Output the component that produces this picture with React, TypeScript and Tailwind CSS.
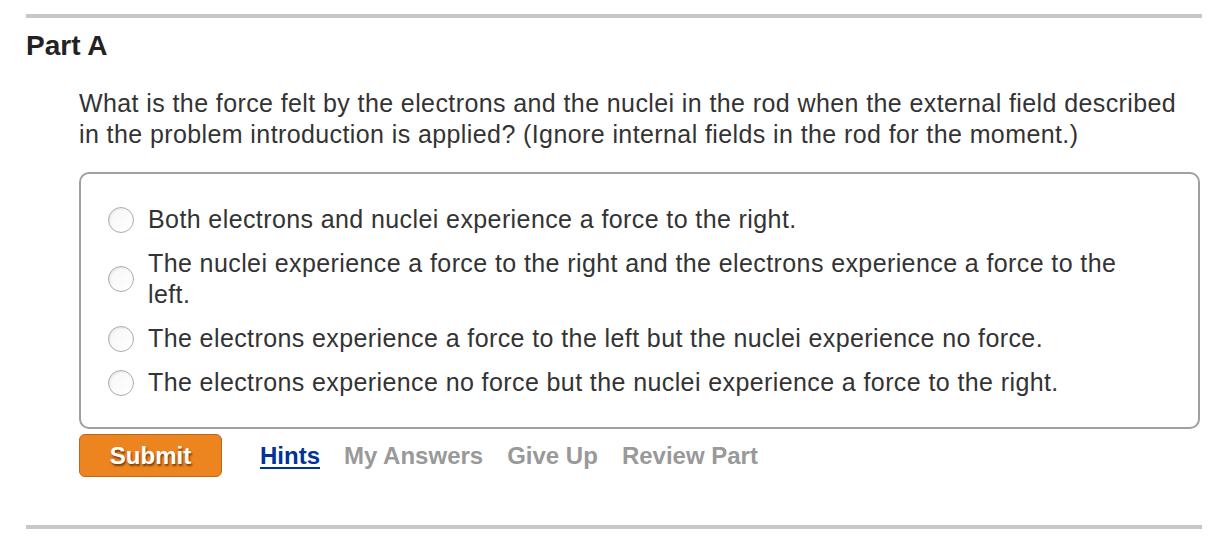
import React from 'react';

const options = [
  'Both electrons and nuclei experience a force to the right.',
  'The nuclei experience a force to the right and the electrons experience a force to the left.',
  'The electrons experience a force to the left but the nuclei experience no force.',
  'The electrons experience no force but the nuclei experience a force to the right.',
];

const Radio: React.FC = () => (
  <span className="block w-[26px] h-[26px] shrink-0 rounded-full border border-[#acacac] bg-gradient-to-br from-[#f6f6f6] to-white shadow-[inset_1px_1px_2px_rgba(0,0,0,0.08)]" />
);

export default function App() {
  return (
    <div className="w-[1220px] h-[536px] bg-white pt-[14px] pl-[26px] pr-[18px] font-['Liberation_Sans',Arial,sans-serif]">
      <div className="h-[4px] bg-[#c8c8c8]" />

      <h2 className="mt-[11px] text-[28px] leading-[34px] font-bold text-[#222]">Part A</h2>

      <div className="pl-[53px] pr-[2px]">
        <p className="mt-[25px] text-[25px] leading-[31px] tracking-[0.4px] text-[#333]">
          What is the force felt by the electrons and the nuclei in the rod when the external field described in
          the problem introduction is applied? (Ignore internal fields in the rod for the moment.)
        </p>

        <div className="mt-[22px] border-2 border-[#a0a0a0] rounded-[10px] pt-[30px] pb-[29px] pl-[27px] pr-[60px] flex flex-col gap-[13px]">
          {options.map((o) => (
            <label key={o} className="flex items-center gap-[14px] text-[25px] leading-[31px] tracking-[0.4px] text-[#333]">
              <Radio />
              <span>{o}</span>
            </label>
          ))}
        </div>

        <div className="mt-[5px] flex items-center text-[24px] font-bold">
          <button className="w-[143px] h-[43px] rounded-[6px] border border-[#c0651c] bg-[#ec8420] text-white [text-shadow:1px_2px_2px_rgba(90,40,0,0.8)]">
            Submit
          </button>
          <div className="ml-[38px] flex items-center gap-[24px]">
            <a className="text-[#003399] underline underline-offset-[3px] decoration-2">Hints</a>
            <span className="text-[#999]">My Answers</span>
            <span className="text-[#999]">Give Up</span>
            <span className="text-[#999]">Review Part</span>
          </div>
        </div>
      </div>

      <div className="mt-[48px] h-[4px] bg-[#c8c8c8]" />
    </div>
  );
}
